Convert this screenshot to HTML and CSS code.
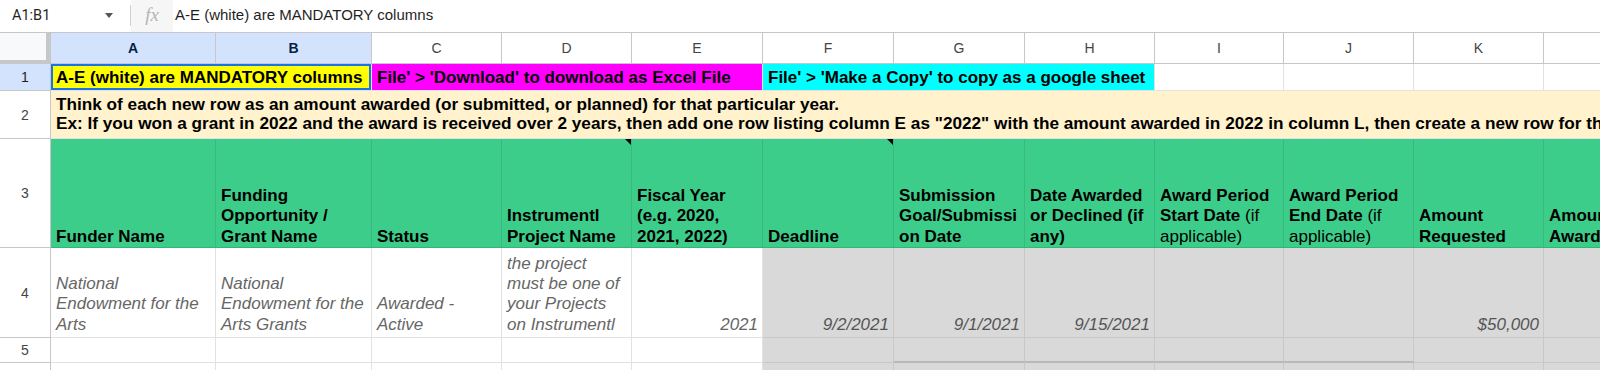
FILE: index.html
```html
<!DOCTYPE html>
<html lang="en">
<head>
  <meta charset="UTF-8">
  <title>Grant Tracker – Sheet</title>
  <link rel="stylesheet" href="styles.css">
</head>
<body>
  <!-- Formula bar -->
  <div class="formula-bar">
    <div class="name-box"><span>A1:B1</span><span class="caret"></span></div>
    <div class="divider"></div>
    <div class="fx">fx</div>
    <div class="formula">A-E (white) are MANDATORY columns</div>
  </div>

  <!-- Grid -->
  <div class="sheet">
    <!-- column headers -->
    <div class="corner"></div>
    <div class="col-head sel">A</div>
    <div class="col-head sel">B</div>
    <div class="col-head">C</div>
    <div class="col-head">D</div>
    <div class="col-head">E</div>
    <div class="col-head">F</div>
    <div class="col-head">G</div>
    <div class="col-head">H</div>
    <div class="col-head">I</div>
    <div class="col-head">J</div>
    <div class="col-head">K</div>
    <div class="col-head">L</div>

    <!-- row 1 -->
    <div class="row-head sel">1</div>
    <div class="cell banner yellow span-2 active">A-E (white) are MANDATORY columns</div>
    <div class="cell banner magenta span-3">File' &gt; 'Download' to download as Excel File</div>
    <div class="cell banner cyan span-3">File' &gt; 'Make a Copy' to copy as a google sheet</div>
    <div class="cell"></div>
    <div class="cell"></div>
    <div class="cell"></div>
    <div class="cell"></div>

    <!-- row 2 -->
    <div class="row-head">2</div>
    <div class="cell note span-all">
      <div>Think of each new row as an amount awarded (or submitted, or planned) for that particular year.</div>
      <div>Ex: If you won a grant in 2022 and the award is received over 2 years, then add one row listing column E as "2022" with the amount awarded in 2022 in column L, then create a new row for the amount awarded in 2023.</div>
    </div>

    <!-- row 3 -->
    <div class="row-head">3</div>
    <div class="cell head"><div>Funder Name</div></div>
    <div class="cell head"><div>Funding<br>Opportunity /<br>Grant Name</div></div>
    <div class="cell head"><div>Status</div></div>
    <div class="cell head flagged"><div>Instrumentl<br>Project Name</div></div>
    <div class="cell head"><div>Fiscal Year<br>(e.g. 2020,<br>2021, 2022)</div></div>
    <div class="cell head flagged"><div>Deadline</div></div>
    <div class="cell head"><div>Submission<br>Goal/Submissi<br>on Date</div></div>
    <div class="cell head"><div>Date Awarded<br>or Declined (if<br>any)</div></div>
    <div class="cell head"><div>Award Period<br>Start Date <span class="plain">(if<br>applicable)</span></div></div>
    <div class="cell head"><div>Award Period<br>End Date <span class="plain">(if<br>applicable)</span></div></div>
    <div class="cell head"><div>Amount<br>Requested</div></div>
    <div class="cell head"><div>Amount<br>Awarded</div></div>

    <!-- row 4 -->
    <div class="row-head">4</div>
    <div class="cell sample"><div>National<br>Endowment for the<br>Arts</div></div>
    <div class="cell sample"><div>National<br>Endowment for the<br>Arts Grants</div></div>
    <div class="cell sample"><div>Awarded -<br>Active</div></div>
    <div class="cell sample"><div>the project<br>must be one of<br>your Projects<br>on Instrumentl</div></div>
    <div class="cell sample num"><div>2021</div></div>
    <div class="cell sample num calc"><div>9/2/2021</div></div>
    <div class="cell sample num calc"><div>9/1/2021</div></div>
    <div class="cell sample num calc"><div>9/15/2021</div></div>
    <div class="cell calc"></div>
    <div class="cell calc"></div>
    <div class="cell sample num calc"><div>$50,000</div></div>
    <div class="cell calc"></div>

    <!-- row 5 -->
    <div class="row-head">5</div>
    <div class="cell"></div>
    <div class="cell"></div>
    <div class="cell"></div>
    <div class="cell"></div>
    <div class="cell"></div>
    <div class="cell calc"></div>
    <div class="cell calc edge"></div>
    <div class="cell calc edge"></div>
    <div class="cell calc edge"></div>
    <div class="cell calc edge"></div>
    <div class="cell calc"></div>
    <div class="cell calc"></div>

    <!-- row 6 -->
    <div class="row-head">6</div>
    <div class="cell"></div>
    <div class="cell"></div>
    <div class="cell"></div>
    <div class="cell"></div>
    <div class="cell"></div>
    <div class="cell calc"></div>
    <div class="cell calc"></div>
    <div class="cell calc"></div>
    <div class="cell calc"></div>
    <div class="cell calc"></div>
    <div class="cell calc"></div>
    <div class="cell calc"></div>
  </div>
</body>
</html>
```

FILE: styles.css
```css
/* ====== Base ====== */
*{box-sizing:border-box}
body{margin:0;background:#fff;font-family:'Liberation Sans',Arial,sans-serif;color:#000;overflow:hidden}

/* ====== Formula bar ====== */
.formula-bar{height:33px;display:flex;align-items:stretch;border-bottom:1px solid #c7c7c7;font-size:15px;color:#1f1f1f}
.name-box{width:130px;display:flex;align-items:center;justify-content:space-between;padding:0 17px 2px 12px;font-family:Roboto,'Liberation Sans',sans-serif;font-size:14.5px}
.caret{width:0;height:0;border-left:4.5px solid transparent;border-right:4.5px solid transparent;border-top:5px solid #555}
.divider{width:1px;background:#d0d0d0;margin:5px 0 6px}
.fx{width:42px;background:#f6f6f6;color:#b5b5b5;font-family:'Liberation Serif',serif;font-style:italic;font-size:19px;display:flex;align-items:center;justify-content:center;padding-bottom:3px}
.formula{display:flex;align-items:center;padding:0 0 3px 2px}

/* ====== Sheet grid ====== */
.sheet{display:grid;grid-template-columns:51px 165px 156px 130px 130px 131px 131px 131px 130px 129px 130px 130px 130px;grid-template-rows:31px 27px 48px 109px 90px 25px 30px;width:1600px;overflow:hidden}

.corner{background:#f8f9fa;border-right:5px solid #c7c7c7;border-bottom:4px solid #c7c7c7}
.col-head{display:flex;align-items:center;justify-content:center;font-size:14px;color:#444;background:#fff;border-right:1px solid #c7c7c7;border-bottom:1px solid #c7c7c7}
.col-head.sel{background:#d3e3fd;color:#041e49;font-weight:bold}
.row-head{display:flex;align-items:center;justify-content:center;font-size:14px;color:#444;background:#fff;border-right:1px solid #c7c7c7;border-bottom:1px solid #c7c7c7}
.row-head.sel{background:#d3e3fd;color:#1f1f1f}

.cell{border-right:1px solid #e2e2e2;border-bottom:1px solid #e2e2e2;font-size:17px;padding:0 5px;overflow:hidden;white-space:nowrap;position:relative}
.span-2{grid-column:span 2}
.span-3{grid-column:span 3}
.span-all{grid-column:span 12}

/* row 1 banners */
.banner{font-weight:bold;display:flex;align-items:center;padding-top:1px}
.yellow{background:#ffff00}
.magenta{background:#ff00ff}
.cyan{background:#00ffff}
.active{box-shadow:inset 0 0 0 2px #1a73e8}

/* row 2 instructions */
.note{background:#fff2cc;font-weight:bold;font-size:17.2px;line-height:18.5px;display:flex;flex-direction:column;justify-content:center;padding-bottom:2px}

/* row 3 headers */
.head{background:#3dcd8b;border-right-color:#37ba7e;border-bottom-color:#2fb874;font-weight:bold;line-height:20.5px;display:flex;align-items:flex-end}
.head .plain{font-weight:normal}
.flagged::after{content:'';position:absolute;top:0;right:0;border-left:6px solid transparent;border-top:6px solid #000}

/* row 4+ sample data */
.sample{font-style:italic;color:#666;line-height:20.3px;display:flex;align-items:flex-end;padding-bottom:2px}
.num{justify-content:flex-end;padding-right:4px}
.calc{background:#d9d9d9;border-right-color:#c8c8c8;border-bottom-color:#c8c8c8}
.calc.sample{color:#555}
.edge{border-bottom:2px solid #b8b8b8}
```
